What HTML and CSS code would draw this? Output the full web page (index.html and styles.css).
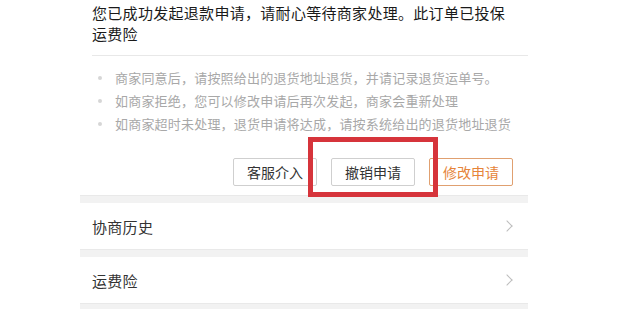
FILE: index.html
```html
<!DOCTYPE html>
<html lang="zh">
<head>
<meta charset="utf-8">
<title>退款申请</title>
<link rel="stylesheet" href="styles.css">
</head>
<body>
<div class="page">
  <section class="card">
    <p class="title">您已成功发起退款申请，请耐心等待商家处理。此订单已投保运费险</p>
    <ul class="tips">
      <li>商家同意后，请按照给出的退货地址退货，并请记录退货运单号。</li>
      <li>如商家拒绝，您可以修改申请后再次发起，商家会重新处理</li>
      <li>如商家超时未处理，退货申请将达成，请按系统给出的退货地址退货</li>
    </ul>
    <div class="actions">
      <button class="btn">客服介入</button>
      <button class="btn">撤销申请</button>
      <button class="btn btn-primary">修改申请</button>
    </div>
  </section>
  <div class="gap"></div>
  <a class="row">协商历史<span class="chev"></span></a>
  <div class="gap"></div>
  <a class="row">运费险<span class="chev"></span></a>
  <div class="gap"></div>
  <div class="highlight"></div>
</div>
</body>
</html>
```
FILE: styles.css
```css
html, body {
  margin: 0;
  padding: 0;
  background: #fff;
}
body {
  font-family: "Noto Sans CJK SC", "Noto Sans", sans-serif;
  color: #333;
}
.page {
  position: relative;
  width: 448px;
  margin-left: 80px;
}
.card {
  padding: 2px 15px 9px 12px;
}
.title {
  margin: 0 -15px 0 0;
  font-size: 15px;
  line-height: 21px;
  letter-spacing: 0.3px;
  color: #1a1a1a;
  padding: 0 20px 11px 0;
  border-bottom: 1px solid #e8e8e8;
}
.tips {
  list-style: none;
  margin: 0;
  padding: 10px 0 0 0;
}
.tips li {
  position: relative;
  padding-left: 23px;
  font-size: 13px;
  line-height: 23px;
  color: #a8a8a8;
  white-space: nowrap;
  letter-spacing: 0.2px;
}
.tips li::before {
  content: "";
  position: absolute;
  left: 6px;
  top: 10px;
  width: 4px;
  height: 4px;
  border-radius: 50%;
  background: #d6d6d6;
}
.actions {
  display: flex;
  justify-content: flex-end;
  gap: 14px;
  margin-top: 23px;
}
.btn {
  width: 84px;
  height: 28px;
  padding: 0;
  border: 1px solid #cfcfcf;
  border-radius: 2px;
  background: #fff;
  font-family: inherit;
  font-size: 14px;
  color: #333;
}
.btn-primary {
  border-color: #e0a070;
  color: #e6843a;
}
.gap {
  height: 7px;
  background: #f2f2f2;
  border-top: 1px solid #e9e9e9;
}
.row {
  display: flex;
  align-items: center;
  justify-content: space-between;
  height: 46px;
  padding: 0 17px 0 12px;
  font-size: 15px;
  color: #333;
  letter-spacing: 0.3px;
}
.chev {
  width: 7px;
  height: 7px;
  border-top: 1px solid #bdbdbd;
  border-right: 1px solid #bdbdbd;
  transform: rotate(45deg);
}
.highlight {
  position: absolute;
  left: 228px;
  top: 137px;
  width: 120px;
  height: 50px;
  border: 5px solid #d6343b;
}
```
